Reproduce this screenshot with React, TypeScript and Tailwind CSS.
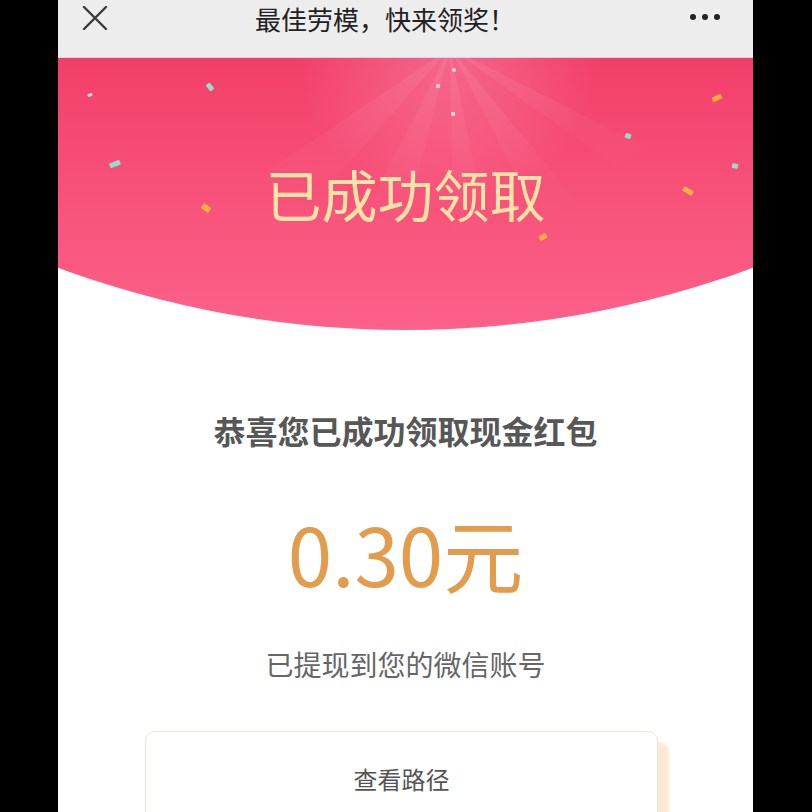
import React from "react";

const cjk = { fontFamily: '"Noto Sans CJK SC", "Noto Sans", sans-serif' };

function Confetti() {
  const rects: { x: number; y: number; w: number; h: number; r: number; c: string }[] = [
    { x: 32, y: 37, w: 5, h: 3, r: -20, c: "#c9d9cf" },
    { x: 152, y: 29, w: 8, h: 5, r: 50, c: "#93e0c4" },
    { x: 57, y: 106, w: 11, h: 5, r: -20, c: "#8fe0c6" },
    { x: 148, y: 150, w: 9, h: 6, r: 35, c: "#f7b13b" },
    { x: 485, y: 179, w: 8, h: 5, r: -30, c: "#f6b23e" },
    { x: 659, y: 40, w: 10, h: 5, r: -25, c: "#f6ac3c" },
    { x: 570, y: 78, w: 6, h: 5, r: 20, c: "#99dcc4" },
    { x: 677, y: 108, w: 6, h: 5, r: 10, c: "#9adcc6" },
    { x: 630, y: 133, w: 11, h: 5, r: 30, c: "#f7b53f" },
  ];
  return (
    <svg className="absolute inset-0 pointer-events-none" width="695" height="272" viewBox="0 0 695 272">
      <defs>
        <radialGradient id="glow" cx="390" cy="0" r="150" gradientUnits="userSpaceOnUse">
          <stop offset="0" stopColor="#ffffff" stopOpacity="0.2" />
          <stop offset="1" stopColor="#ffffff" stopOpacity="0" />
        </radialGradient>
        <linearGradient id="ray" x1="0" y1="0" x2="0" y2="1">
          <stop offset="0" stopColor="#ffffff" stopOpacity="0.08" />
          <stop offset="1" stopColor="#ffffff" stopOpacity="0" />
        </linearGradient>
      </defs>
      <polygon points="392,-10 200,120 260,140" fill="url(#ray)" />
      <polygon points="392,-10 300,170 345,175" fill="url(#ray)" />
      <polygon points="392,-10 395,180 430,175" fill="url(#ray)" />
      <polygon points="392,-10 480,160 520,145" fill="url(#ray)" />
      <polygon points="392,-10 560,110 590,90" fill="url(#ray)" />
      <rect x="0" y="0" width="695" height="200" fill="url(#glow)" />
      <circle cx="396" cy="12" r="2" fill="#ffffff" opacity="0.7" />
      <circle cx="380" cy="28" r="2.2" fill="#ffffff" opacity="0.7" />
      <circle cx="395" cy="56" r="2.2" fill="#ffffff" opacity="0.7" />
      {rects.map((p, i) => (
        <rect
          key={i}
          x={p.x - p.w / 2}
          y={p.y - p.h / 2}
          width={p.w}
          height={p.h}
          rx="1"
          fill={p.c}
          transform={`rotate(${p.r} ${p.x} ${p.y})`}
        />
      ))}
    </svg>
  );
}

export default function App() {
  return (
    <div className="w-[812px] h-[812px] overflow-hidden flex bg-black" style={cjk}>
      <div className="w-[58px] shrink-0 bg-black" />
      <div className="w-[695px] shrink-0 bg-white flex flex-col">
        <div className="h-[58px] shrink-0 bg-[#ededed] border-b border-[#d9d4d5] flex items-start pl-[24px] pr-[33px]">
          <svg width="26" height="24" viewBox="0 0 26 24" className="mt-[6px]">
            <path d="M2 1 L24 23 M24 1 L2 23" stroke="#3a3a3a" strokeWidth="2.4" strokeLinecap="round" />
          </svg>
          <div className="ml-[147px] mt-[6px] text-[26px] leading-none font-normal text-[#222222]">
            最佳劳模，快来领奖！
          </div>
          <div className="ml-auto mt-[14px] flex gap-[6px]">
            <span className="w-[6px] h-[6px] rounded-full bg-[#222222]" />
            <span className="w-[6px] h-[6px] rounded-full bg-[#222222]" />
            <span className="w-[6px] h-[6px] rounded-full bg-[#222222]" />
          </div>
        </div>
        <div className="relative h-[272px] shrink-0 bg-gradient-to-b from-[#f23f6a] to-[#fc6189] [clip-path:circle(1002px_at_50%_-730px)]">
          <Confetti />
          <div className="relative pt-[107px] text-center text-[56px] leading-none text-[#fde4a6]">
            已成功领取
          </div>
        </div>
        <div className="mt-[84px] text-center text-[32px] leading-none font-bold text-[#575757]">
          恭喜您已成功领取现金红包
        </div>
        <div className="mt-[66px] text-center text-[80px] leading-none text-[#e29c4e]">0.30元</div>
        <div className="mt-[58px] text-center text-[28px] leading-none text-[#666666]">已提现到您的微信账号</div>
        <div className="mt-[53px] ml-[87px] w-[513px] h-[110px] shrink-0 rounded-[10px] border border-[#efe4d8] bg-white shadow-[11px_11px_3px_#fde8d3] pt-[35px] text-center text-[24px] leading-none text-[#555555]">
          查看路径
        </div>
      </div>
      <div className="flex-1 bg-black" />
    </div>
  );
}
